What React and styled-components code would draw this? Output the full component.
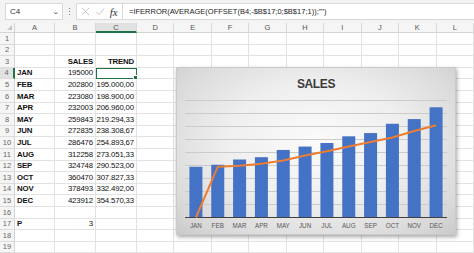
import React from "react";
import styled, { createGlobalStyle } from "styled-components";

const GlobalStyle = createGlobalStyle`
  html, body {
    margin: 0;
    padding: 0;
    background: #fff;
    overflow: hidden;
  }
  body {
    font-family: "Liberation Sans", Arial, sans-serif;
  }
`;

const GREEN = "#217346";
const COLS = ["A", "B", "C", "D", "E", "F", "G", "H", "I", "J", "K", "L"];

const MONTHS = [
  ["JAN", 195000, ""],
  ["FEB", 202800, "195.000,00"],
  ["MAR", 223080, "198.900,00"],
  ["APR", 232003, "206.960,00"],
  ["MAY", 259843, "219.294,33"],
  ["JUN", 272835, "238.308,67"],
  ["JUL", 286476, "254.893,67"],
  ["AUG", 312258, "273.051,33"],
  ["SEP", 324748, "290.523,00"],
  ["OCT", 360470, "307.827,33"],
  ["NOV", 378493, "332.492,00"],
  ["DEC", 423912, "354.570,33"],
];

const TREND = [0, 195000, 198900, 206960, 219294.33, 238308.67, 254893.67, 273051.33, 290523, 307827.33, 332492, 354570.33];

// Sheet shell

const Sheet = styled.div`
  position: relative;
  width: 474px;
  height: 253px;
  overflow: hidden;
  background: #fff;
`;

// Formula bar

const FormulaBar = styled.div`
  height: 23px;
  box-sizing: border-box;
  padding: 3px 0 3px 5px;
  display: flex;
  align-items: stretch;
  background: #f3f3f3;
`;

const NameBox = styled.div`
  width: 58px;
  box-sizing: border-box;
  display: flex;
  align-items: center;
  justify-content: space-between;
  padding: 0 3px 0 4px;
  background: #fff;
  border: 1px solid #d9d9d9;
  font-size: 8px;
  color: #333;
`;

const Chevron = styled.span`
  font-size: 7px;
  color: #444;
  transform: scaleX(1.3);
`;

const Dots = styled.div`
  width: 13px;
  display: flex;
  align-items: center;
  justify-content: center;
  color: #777;
  font-size: 9px;
`;

const IconGroup = styled.div`
  width: 46px;
  box-sizing: border-box;
  display: flex;
  align-items: center;
  justify-content: space-around;
  padding: 0 2px;
  background: #fff;
  border: 1px solid #d9d9d9;
  border-right: none;
`;

const Fx = styled.span`
  font-family: "Liberation Serif", "Times New Roman", serif;
  font-style: italic;
  font-size: 11px;
  color: #333;
`;

const FormulaInput = styled.div`
  flex: 1;
  display: flex;
  align-items: center;
  padding-left: 6px;
  background: #fff;
  border: 1px solid #d9d9d9;
  border-right: none;
  font-size: 7.5px;
  color: #222;
  white-space: nowrap;
`;

// Grid

const Grid = styled.div`
  display: grid;
  grid-template-columns: 15px 40px 41px 41px repeat(9, 37.45px);
  grid-template-rows: 10px repeat(19, 11.6px);
`;

const Corner = styled.div`
  position: relative;
  background: #f5f5f5;
  border-right: 1px solid #d4d4d4;
  border-bottom: 1px solid #d4d4d4;
  &::after {
    content: "";
    position: absolute;
    right: 2px;
    bottom: 2px;
    border-style: solid;
    border-width: 0 0 5px 5px;
    border-color: transparent transparent #c4c4c4 transparent;
  }
`;

const ColHeader = styled.div`
  box-sizing: border-box;
  display: flex;
  align-items: center;
  justify-content: center;
  background: ${(p) => (p.$active ? "#e1e1e1" : "#f5f5f5")};
  border-right: 1px solid #d9d9d9;
  border-bottom: ${(p) => (p.$active ? `2px solid ${GREEN}` : "1px solid #d4d4d4")};
  font-size: 7.5px;
  color: #555;
`;

const RowHeader = styled.div`
  box-sizing: border-box;
  display: flex;
  align-items: flex-end;
  justify-content: center;
  padding-bottom: 1px;
  background: ${(p) => (p.$active ? "#e1e1e1" : "#f5f5f5")};
  border-right: ${(p) => (p.$active ? `2px solid ${GREEN}` : "1px solid #d4d4d4")};
  border-bottom: 1px solid #dcdcdc;
  font-size: 7.5px;
  color: #666;
`;

const Cell = styled.div`
  position: relative;
  box-sizing: border-box;
  display: flex;
  align-items: flex-end;
  justify-content: ${(p) => (p.$right ? "flex-end" : "flex-start")};
  padding: 0 2px 1px;
  border-right: 1px solid #e2e2e2;
  border-bottom: 1px solid #e2e2e2;
  font-size: 7.8px;
  letter-spacing: -0.15px;
  font-weight: ${(p) => (p.$bold ? 700 : 400)};
  color: #111;
  white-space: nowrap;
  outline: ${(p) => (p.$selected ? `1.5px solid ${GREEN}` : "none")};
  outline-offset: -1.5px;
`;

const Handle = styled.span`
  position: absolute;
  right: -2px;
  bottom: -2px;
  width: 3px;
  height: 3px;
  background: ${GREEN};
  border: 1px solid #fff;
`;

// Chart

const Chart = styled.div`
  position: absolute;
  left: 176px;
  top: 67px;
  width: 280px;
  height: 168px;
  box-sizing: border-box;
  display: flex;
  flex-direction: column;
  border: 1px solid #cacaca;
  background: radial-gradient(ellipse at 50% 45%, #fbfbfb 0%, #efefef 45%, #d8d8d8 85%, #c9c9c9 100%);
  box-shadow: 1px 2px 4px rgba(0, 0, 0, 0.35);
`;

const ChartTitle = styled.div`
  height: 32px;
  display: flex;
  align-items: center;
  justify-content: center;
  font-size: 12px;
  font-weight: 700;
  color: #3b3b3b;
  letter-spacing: -0.4px;
`;

const AxisLabels = styled.div`
  display: grid;
  grid-template-columns: repeat(12, 1fr);
  margin: 0 8px;
  padding-top: 3px;
`;

const AxisLabel = styled.span`
  text-align: center;
  font-size: 6.3px;
  color: #595959;
`;

const PLOT_W = 262;
const PLOT_X = 8;
const TOP = 0.5;
const BASE = 117.5;
const MAX = 450000;
const CW = PLOT_W / 12;

const yOf = (v) => BASE - (v / MAX) * (BASE - TOP);

const SalesChart = () => {
  const lines = Array.from({ length: 9 }, (_, k) => TOP + k * 13);
  const points = TREND.map((v, i) => `${PLOT_X + CW * (i + 0.5)},${yOf(v)}`).join(" ");
  return (
    <Chart>
      <ChartTitle>SALES</ChartTitle>
      <svg width="278" height="119" style={{ display: "block" }}>
        {lines.map((y) => (
          <line key={y} x1={PLOT_X} x2={PLOT_X + PLOT_W} y1={y} y2={y} stroke="#cbcbcb" strokeWidth="1" />
        ))}
        {MONTHS.map(([m, v], i) => (
          <rect
            key={m}
            x={PLOT_X + CW * (i + 0.5) - 6.5}
            y={yOf(v)}
            width="13"
            height={BASE - yOf(v)}
            fill="#4472C4"
          />
        ))}
        <line x1={PLOT_X} x2={PLOT_X + PLOT_W} y1={BASE} y2={BASE} stroke="#404040" strokeWidth="1" />
        <polyline points={points} fill="none" stroke="#ED7D31" strokeWidth="2" strokeLinejoin="round" />
      </svg>
      <AxisLabels>
        {MONTHS.map(([m]) => (
          <AxisLabel key={m}>{m}</AxisLabel>
        ))}
      </AxisLabels>
    </Chart>
  );
};

const getCell = (r, col) => {
  if (r === 3) {
    if (col === "B") return { text: "SALES", bold: true, right: true };
    if (col === "C") return { text: "TREND", bold: true, right: true };
  }
  if (r >= 4 && r <= 15) {
    const [m, s, t] = MONTHS[r - 4];
    if (col === "A") return { text: m, bold: true };
    if (col === "B") return { text: String(s), right: true };
    if (col === "C") return { text: t, right: true };
  }
  if (r === 17) {
    if (col === "A") return { text: "P", bold: true };
    if (col === "B") return { text: "3", right: true };
  }
  return { text: "" };
};

const App = () => {
  const rows = Array.from({ length: 19 }, (_, i) => i + 1);
  return (
    <Sheet>
      <GlobalStyle />
      <FormulaBar>
        <NameBox>
          C4
          <Chevron>⌄</Chevron>
        </NameBox>
        <Dots>⋮</Dots>
        <IconGroup>
          <svg width="9" height="9" viewBox="0 0 10 10">
            <path d="M1 1 L9 9 M9 1 L1 9" stroke="#c4c4c4" strokeWidth="1.1" fill="none" />
          </svg>
          <svg width="10" height="9" viewBox="0 0 10 10">
            <path d="M1 5.5 L4 8.5 L9.5 1.5" stroke="#c4c4c4" strokeWidth="1.1" fill="none" />
          </svg>
          <Fx>fx</Fx>
        </IconGroup>
        <FormulaInput>=IFERROR(AVERAGE(OFFSET(B4;-$B$17;0;$B$17;1));"")</FormulaInput>
      </FormulaBar>
      <Grid>
        <Corner />
        {COLS.map((c) => (
          <ColHeader key={c} $active={c === "C"}>
            {c}
          </ColHeader>
        ))}
        {rows.map((r) => (
          <React.Fragment key={r}>
            <RowHeader $active={r === 4}>{r}</RowHeader>
            {COLS.map((c) => {
              const cell = getCell(r, c);
              const selected = r === 4 && c === "C";
              return (
                <Cell key={c} $bold={cell.bold} $right={cell.right} $selected={selected}>
                  {cell.text}
                  {selected && <Handle />}
                </Cell>
              );
            })}
          </React.Fragment>
        ))}
      </Grid>
      <SalesChart />
    </Sheet>
  );
};

export default App;
